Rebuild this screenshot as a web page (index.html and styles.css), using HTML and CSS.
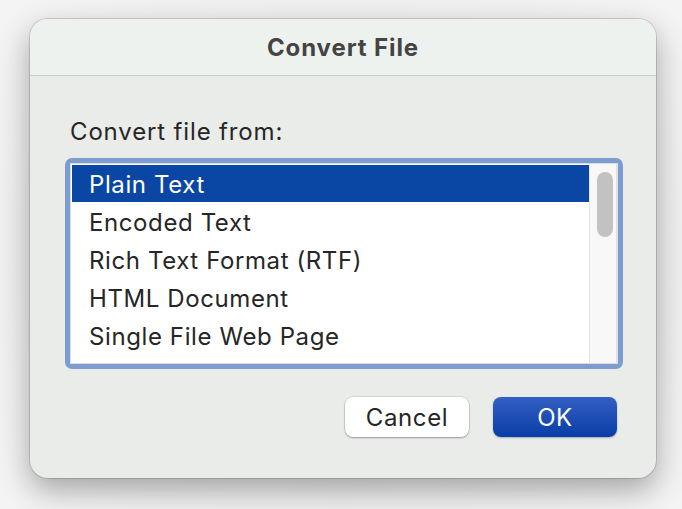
FILE: index.html
```html
<!DOCTYPE html>
<html>
<head>
<meta charset="utf-8">
<link rel="stylesheet" href="styles.css">
</head>
<body>
<div class="dialog">
  <div class="titlebar">Convert File</div>
  <div class="content">
    <div class="label">Convert file from:</div>
    <div class="listbox">
      <div class="items">
        <div class="item selected">Plain Text</div>
        <div class="item">Encoded Text</div>
        <div class="item">Rich Text Format (RTF)</div>
        <div class="item">HTML Document</div>
        <div class="item">Single File Web Page</div>
      </div>
      <div class="scrolltrack"><div class="thumb"></div></div>
    </div>
    <div class="buttons">
      <button class="btn cancel">Cancel</button>
      <button class="btn ok">OK</button>
    </div>
  </div>
</div>
</body>
</html>
```

FILE: styles.css
```css
html, body {
  margin: 0;
  padding: 0;
}
body {
  width: 682px;
  height: 509px;
  background: radial-gradient(ellipse at 50% 50%, #e4e4e4 0%, #efefef 70%, #f4f4f4 100%);
  font-family: Inter, "Noto Sans", sans-serif;
  overflow: hidden;
  padding-top: 19px;
  padding-left: 30px;
  box-sizing: border-box;
}
.dialog {
  width: 626px;
  height: 459px;
  border-radius: 18px;
  background: #e9ece9;
  box-shadow: 0 0 0 1px rgba(0,0,0,0.14), 0 12px 30px rgba(0,0,0,0.32);
  overflow: hidden;
  display: flex;
  flex-direction: column;
}
.titlebar {
  height: 56px;
  background: #eef2ee;
  border-bottom: 1px solid #c9cbc9;
  display: flex;
  align-items: center;
  justify-content: center;
  font-weight: 700;
  font-size: 24px;
  color: #444444;
  letter-spacing: 0.9px;
}
.content {
  padding: 43px 33px 0 35px;
  display: flex;
  flex-direction: column;
}
.label {
  font-size: 24px;
  line-height: 26px;
  letter-spacing: 0.85px;
  color: #262626;
  padding-left: 5px;
  margin-bottom: 13px;
}
.listbox {
  width: 558px;
  height: 211px;
  box-sizing: border-box;
  border: 5px solid #7d9dd0;
  border-radius: 7px;
  display: flex;
  background: #ffffff;
  overflow: hidden;
}
.items {
  flex: 1;
  border: 1px solid #dcdcdc;
  border-right: none;
  padding: 1px 0 0 1px;
  background: #fff;
}
.item {
  height: 38px;
  line-height: 40px;
  padding-left: 17px;
  font-size: 24px;
  letter-spacing: 0.6px;
  color: #262626;
}
.item.selected {
  height: 37px;
  line-height: 39px;
  margin-bottom: 1px;
  background: #0a46a3;
  color: #ffffff;
}
.scrolltrack {
  width: 29px;
  background: #f8f8f8;
  border-left: 1px solid #e4e4e4;
  border-right: 2px solid #e2e2e2;
  border-top: 1px solid #dcdcdc;
  border-bottom: 1px solid #dcdcdc;
  padding: 8px 0 0 7px;
  box-sizing: border-box;
}
.thumb {
  width: 16px;
  height: 65px;
  border-radius: 8px;
  background: #c2c2c2;
}
.buttons {
  display: flex;
  justify-content: flex-end;
  gap: 24px;
  margin-top: 28px;
  margin-right: 6px;
}
.btn {
  width: 124px;
  height: 40px;
  border-radius: 8px;
  font-family: Inter, "Noto Sans", sans-serif;
  font-size: 24px;
  letter-spacing: 0.6px;
  border: none;
  padding: 0;
}
.cancel {
  background: #ffffff;
  color: #262626;
  box-shadow: 0 0 0 0.5px rgba(0,0,0,0.15), 0 1px 2px rgba(0,0,0,0.3);
}
.ok {
  background: linear-gradient(#3360c2, #0a3da8);
  color: #ffffff;
  box-shadow: 0 1px 2px rgba(0,0,0,0.25);
}
```
